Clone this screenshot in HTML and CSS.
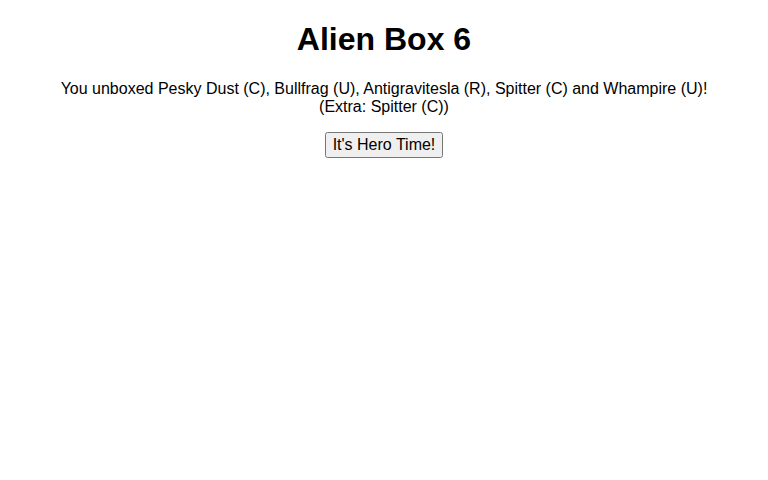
FILE: index.html
```html
<!DOCTYPE html>
<html>
<head>
<meta charset="utf-8">
<title>Alien Box 6</title>
<link rel="stylesheet" href="styles.css">
</head>
<body>
<main class="box">
  <h1 class="box-title">Alien Box 6</h1>
  <p class="box-result">You unboxed Pesky Dust (C), Bullfrag (U), Antigravitesla (R), Spitter (C) and Whampire (U)!<br>(Extra: Spitter (C))</p>
  <button class="box-button" type="button">It's Hero Time!</button>
</main>
</body>
</html>
```
FILE: styles.css
```css
body {
  font-family: "Liberation Sans", Arial, sans-serif;
  color: #000;
  background: #fff;
}

.box {
  text-align: center;
}

.box-title {
  font-size: 32px;
  margin: 13px 0 22px;
}

.box-result {
  font-size: 16px;
}

.box-button {
  font-family: inherit;
  font-size: 16px;
  padding: 2px 6px;
}
```
